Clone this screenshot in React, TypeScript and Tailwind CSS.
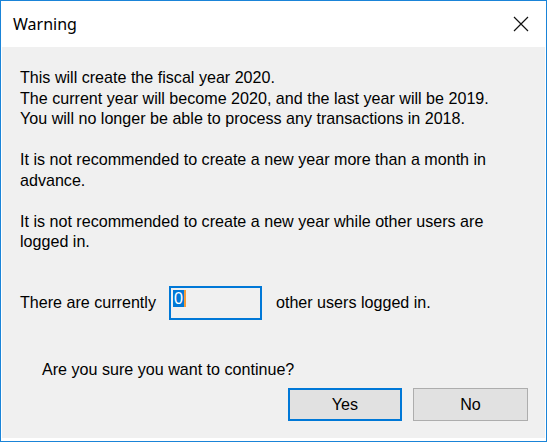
import React from "react";

export default function App() {
  const font = { fontFamily: '"Liberation Sans", Arial, sans-serif' };
  return (
    <div className="w-[547px] h-[442px] bg-[#1a84d8] p-[1px] overflow-hidden" style={font}>
      <div className="w-full h-full flex flex-col bg-white">
        <div className="h-[46px] shrink-0 flex items-center justify-between pl-[12px] pr-[17px] bg-white">
          <span className="text-[16px] text-black" style={{ fontFamily: '"Noto Sans", "Open Sans", sans-serif' }}>Warning</span>
          <svg width="16" height="16" viewBox="0 0 16 16">
            <path d="M1 1 L15 15 M15 1 L1 15" stroke="#111" strokeWidth="1.2" fill="none" />
          </svg>
        </div>
        <div className="flex-1 bg-[#f0f0f0] mx-[1px] mb-[3px] flex flex-col text-[16.1px] leading-[20.5px] text-black pl-[18px] pt-[20px]">
          <p>This will create the fiscal year 2020.</p>
          <p>The current year will become 2020, and the last year will be 2019.</p>
          <p>You will no longer be able to process any transactions in 2018.</p>
          <p className="mt-[20.5px]">It is not recommended to create a new year more than a month in</p>
          <p>advance.</p>
          <p className="mt-[20.5px]">It is not recommended to create a new year while other users are</p>
          <p>logged in.</p>
          <div className="flex items-center mt-[34px]">
            <span>There are currently</span>
            <div className="ml-[13px] w-[93px] h-[34px] shrink-0 border-2 border-[#0078d7] bg-[#f0f0f0] flex items-start pt-[2px] pl-[2px]">
              <span className="bg-[#0078d7] text-white leading-[17px] pl-[1px] pr-[1px] border-r-2 border-[#f59c38]">0</span>
            </div>
            <span className="ml-[14px]">other users logged in.</span>
          </div>
          <p className="mt-[39px] pl-[22px]">Are you sure you want to continue?</p>
          <div className="flex justify-end gap-[11px] pr-[17px] mt-[9px]">
            <button className="w-[114px] h-[33px] bg-[#e1e1e1] border-2 border-[#0078d7] text-[16.1px]" style={font}>Yes</button>
            <button className="w-[115px] h-[33px] bg-[#e1e1e1] border border-[#adadad] text-[16.1px]" style={font}>No</button>
          </div>
        </div>
      </div>
    </div>
  );
}
